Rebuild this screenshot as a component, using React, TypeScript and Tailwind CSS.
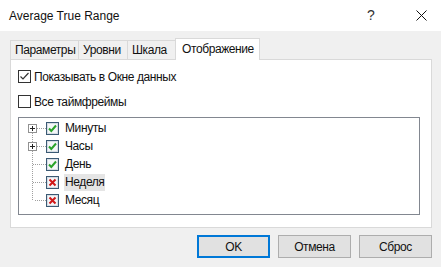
import React from 'react';

const font = { fontFamily: '"Liberation Sans", Arial, sans-serif' };

const TreeCheck = ({ on }: { on: boolean }) => (
  <svg width="13" height="13" viewBox="0 0 13 13" className="shrink-0">
    <rect x="0.5" y="0.5" width="12" height="12" fill="#f4f6f8" stroke="#3b5a74" />
    <rect x="1.5" y="1.5" width="10" height="10" fill="none" stroke="#d6dde4" />
    {on ? (
      <path d="M3 6.5 L5.3 9 L10 3.5" fill="none" stroke="#2aa32a" strokeWidth="2" />
    ) : (
      <path d="M3.5 3.5 L9.5 9.5 M9.5 3.5 L3.5 9.5" fill="none" stroke="#d01818" strokeWidth="2" />
    )}
  </svg>
);

const PlusBox = () => (
  <svg width="9" height="9" viewBox="0 0 9 9" className="shrink-0">
    <rect x="0.5" y="0.5" width="8" height="8" fill="#fff" stroke="#919191" />
    <path d="M2 4.5 H7 M4.5 2 V7" stroke="#222" />
  </svg>
);

const rows = [
  { label: 'Минуты', on: true, plus: true },
  { label: 'Часы', on: true, plus: true },
  { label: 'День', on: true, plus: false },
  { label: 'Неделя', on: false, plus: false, sel: true },
  { label: 'Месяц', on: false, plus: false, last: true },
];

const WinCheck = ({ checked }: { checked: boolean }) => (
  <span className="w-[13px] h-[13px] border border-[#333] bg-white flex items-center justify-center shrink-0">
    {checked && (
      <svg width="11" height="11" viewBox="0 0 11 11">
        <path d="M1.5 5.5 L4 8 L9.5 2" fill="none" stroke="#333" strokeWidth="1.2" />
      </svg>
    )}
  </span>
);

export default function App() {
  return (
    <div className="w-[441px] h-[267px] bg-[#f0f0f0] flex flex-col text-[12px] text-[#111] overflow-hidden" style={font}>
      <div className="h-[31px] bg-white flex items-center pl-[9px] shrink-0">
        <span className="text-[12px] flex-1 mt-[1px]">Average True Range</span>
        <span className="text-[14px] w-[20px] mr-[35px] text-center text-[#333]">?</span>
        <svg width="11" height="11" viewBox="0 0 11 11" className="mr-[14px]">
          <path d="M0.5 0.5 L10.5 10.5 M10.5 0.5 L0.5 10.5" stroke="#111" strokeWidth="1" />
        </svg>
      </div>

      <div className="flex flex-col tracking-[-0.4px]">
        <div className="flex items-end h-[28px] ml-[10px]">
          <div className="h-[19px] w-[69px] border border-b-0 border-[#d9d9d9] flex items-center pl-[4px]">Параметры</div>
          <div className="h-[19px] w-[49px] border border-l-0 border-b-0 border-[#d9d9d9] flex items-center pl-[4px]">Уровни</div>
          <div className="h-[19px] w-[48px] border border-l-0 border-b-0 border-[#d9d9d9] flex items-center pl-[4px]">Шкала</div>
          <div className="h-[22px] w-[85px] -ml-[1px] -mb-px relative z-10 bg-white border border-b-0 border-[#d9d9d9] flex items-center pl-[6px] pb-[1px]">Отображение</div>
        </div>

        <div className="mx-[10px] w-[422px] h-[169px] bg-white border border-[#d9d9d9] pl-[7px] pt-[10px] flex flex-col">
          <label className="flex items-center gap-[3px] h-[13px]">
            <WinCheck checked={true} />
            <span>Показывать в Окне данных</span>
          </label>
          <label className="flex items-center gap-[3px] h-[13px] mt-[12px]">
            <WinCheck checked={false} />
            <span>Все таймфреймы</span>
          </label>
          <div className="mt-[9px] w-[402px] h-[98px] border border-[#828790] pt-[1px] relative">
            <div className="absolute left-[13px] top-[10px] h-[72px] border-l border-dotted border-[#a0a0a0]" />
            {rows.map((r) => (
              <div key={r.label} className="h-[18px] flex items-center relative">
                <div className="w-[27px] relative h-full flex items-center">
                  <div className="absolute left-[14px] w-[13px] top-[9px] border-t border-dotted border-[#a0a0a0]" />
                  {r.last && <div className="absolute left-[13px] top-[9px] h-[9px] w-[2px] bg-white" />}
                  {r.plus && (
                    <div className="absolute left-[9px] top-[5px]">
                      <PlusBox />
                    </div>
                  )}
                </div>
                <TreeCheck on={r.on} />
                <span className={`ml-[5px] px-[1px] h-[17px] flex items-center ${r.sel ? 'bg-[#e5e5e5]' : ''}`}>{r.label}</span>
              </div>
            ))}
          </div>
        </div>

        <div className="flex justify-end gap-[8px] mr-[9px] mt-[7px]">
          <button className="w-[73px] h-[23px] bg-[#e1e1e1] border-2 border-[#0078d7] text-[12px]">OK</button>
          <button className="w-[73px] h-[23px] bg-[#e1e1e1] border border-[#adadad] text-[12px]">Отмена</button>
          <button className="w-[73px] h-[23px] bg-[#e1e1e1] border border-[#adadad] text-[12px]">Сброс</button>
        </div>
      </div>
    </div>
  );
}
